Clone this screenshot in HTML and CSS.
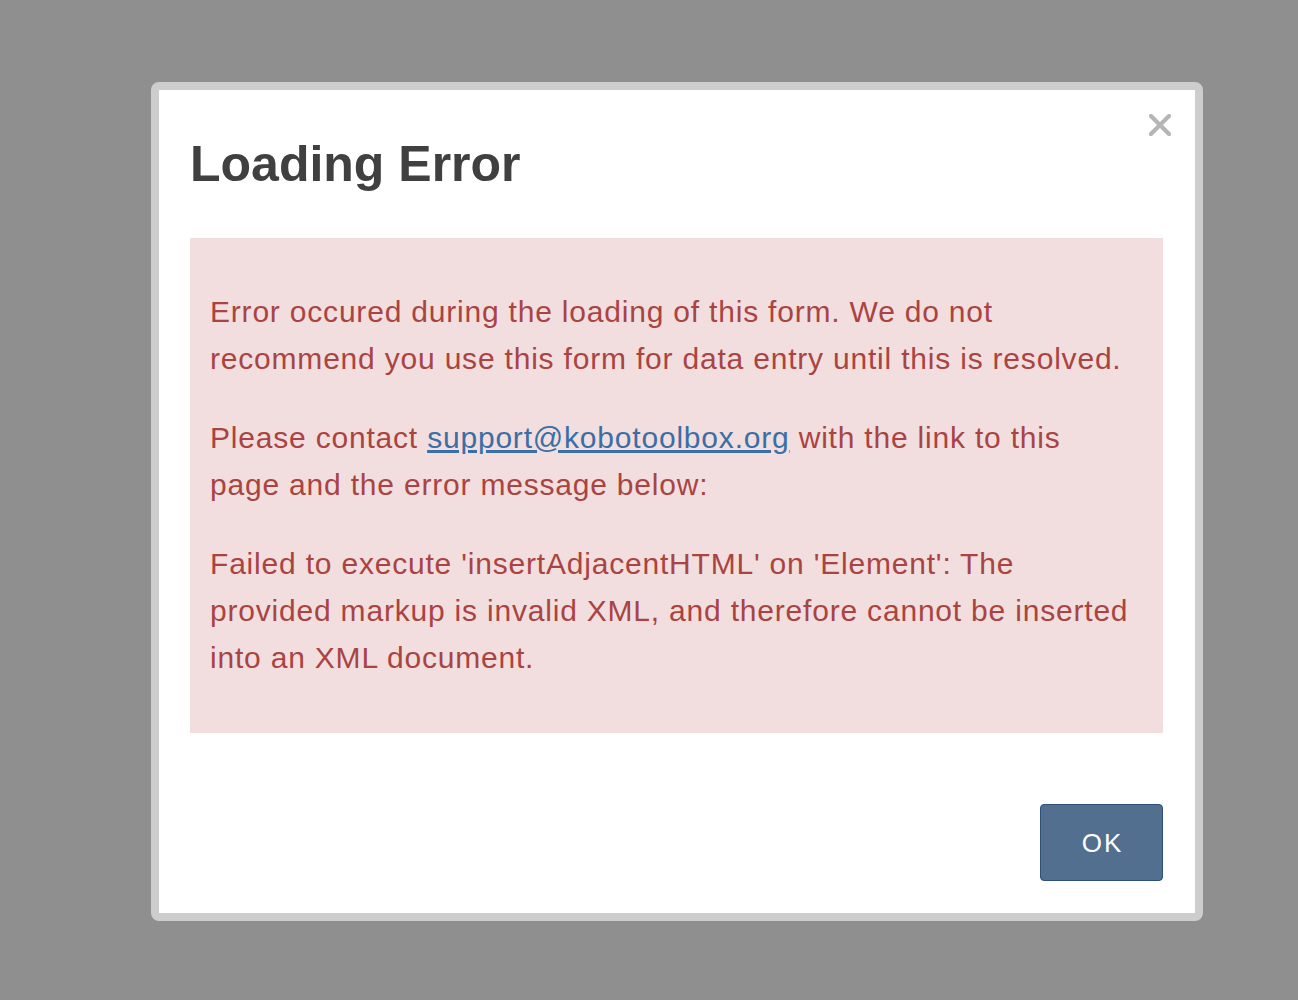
FILE: index.html
```html
<!DOCTYPE html>
<html lang="en">
<head>
<meta charset="utf-8">
<title>Loading Error</title>
<link rel="stylesheet" href="styles.css">
</head>
<body>
<div class="overlay">
  <div class="modal">
    <button class="close" aria-label="Close">
      <svg viewBox="0 0 22 22" width="22" height="22"><path d="M2 2 L20 20 M20 2 L2 20" stroke="#b5b5b5" stroke-width="4.2" stroke-linecap="square"/></svg>
    </button>
    <h1 class="title">Loading Error</h1>
    <div class="alert">
      <p>Error occured during the loading of this form. We do not recommend you use this form for data entry until this is resolved.</p>
      <p>Please contact <a href="#">support@kobotoolbox.org</a> with the link to this page and the error message below:</p>
      <p>Failed to execute 'insertAdjacentHTML' on 'Element': The provided markup is invalid XML, and therefore cannot be inserted into an XML document.</p>
    </div>
    <div class="footer">
      <button class="ok">OK</button>
    </div>
  </div>
</div>
</body>
</html>
```

FILE: styles.css
```css
html, body {
  margin: 0;
  padding: 0;
  background: #8f8f8f;
  font-family: "Liberation Sans", Arial, Helvetica, sans-serif;
}
.overlay {
  padding: 82px 0 0 151px;
  min-height: 918px;
}
.modal {
  position: relative;
  width: 1036px;
  height: 823px;
  box-sizing: content-box;
  background: #ffffff;
  border: 8px solid #cdcdcd;
  border-radius: 8px;
  padding: 0;
  display: flex;
  flex-direction: column;
}
.modal > * {
  margin-left: 31px;
  margin-right: 32px;
}
.close {
  position: absolute;
  top: 24px;
  right: 24px;
  margin: 0;
  padding: 0;
  border: 0;
  background: transparent;
  width: 22px;
  height: 22px;
  cursor: pointer;
}
.close svg { display: block; }
.title {
  margin-top: 47px;
  margin-bottom: 0;
  font-size: 50px;
  line-height: 55px;
  font-weight: bold;
  color: #404040;
}
.alert {
  margin-top: 46px;
  background: #f2dede;
  color: #a94442;
  padding: 50px 28px 52px 20px;
  font-size: 30px;
  line-height: 47px;
  letter-spacing: 0.8px;
}
.alert p {
  margin: 0 0 32px 0;
}
.alert p:last-child { margin-bottom: 0; }
.alert a {
  color: #3a6ea5;
  text-decoration: underline;
}
.footer {
  margin-top: 71px;
  display: flex;
  justify-content: flex-end;
}
.ok {
  width: 123px;
  height: 77px;
  background: #536f8f;
  border: 1px solid #2d4f7c;
  border-radius: 4px;
  color: #ffffff;
  font-family: "Liberation Sans", Arial, sans-serif;
  font-size: 26px;
  letter-spacing: 2px;
  padding: 2px 0 0 2px;
  cursor: pointer;
}
```
